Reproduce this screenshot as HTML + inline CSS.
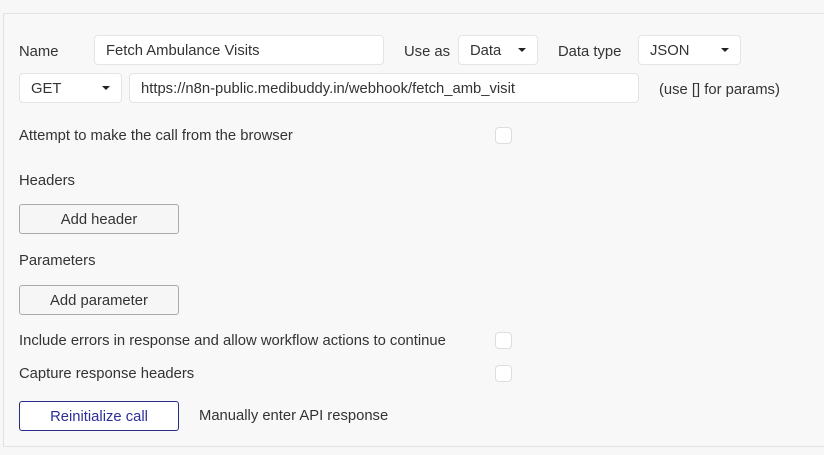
<!DOCTYPE html>
<html><head><style>
body{margin:0;width:824px;height:455px;background:#f7f7f7;font-family:"Liberation Sans",sans-serif;font-size:14.8px;color:#333;position:relative;overflow:hidden}
.p{position:absolute;left:3px;top:13px;width:840px;height:434px;border:1px solid #e2e2e2;background:#f8f8f8;box-sizing:border-box}
.a{position:absolute;white-space:nowrap}
.t{line-height:18px}
.in{position:absolute;background:#fff;border:1px solid #e4e4e4;border-radius:4px;box-sizing:border-box;padding-left:11px;white-space:nowrap}
.car{position:absolute;right:11px;top:12px;width:0;height:0;border-left:4px solid transparent;border-right:4px solid transparent;border-top:4px solid #222}
.cb{position:absolute;width:17px;height:17px;background:#fff;border:1px solid #ddd;border-radius:4px;box-sizing:border-box}
.bt{position:absolute;left:19px;width:160px;height:30px;border:1px solid #aaa;border-radius:3px;box-sizing:border-box;background:#f6f6f6;text-align:center;line-height:30px}
</style></head><body>
<div class="p"></div>
<div class="a t" style="left:19px;top:43px">Name</div>
<div class="in" style="left:94px;top:35px;width:290px;height:30px;line-height:30px">Fetch Ambulance Visits</div>
<div class="a t" style="left:404px;top:43px">Use as</div>
<div class="in" style="left:458px;top:35px;width:80px;height:30px;line-height:30px">Data<span class="car"></span></div>
<div class="a t" style="left:558px;top:43px">Data type</div>
<div class="in" style="left:638px;top:35px;width:103px;height:30px;line-height:30px">JSON<span class="car"></span></div>
<div class="in" style="left:19px;top:73px;width:103px;height:30px;line-height:30px">GET<span class="car"></span></div>
<div class="in" style="left:129px;top:73px;width:510px;height:30px;line-height:30px">https://n8n-public.medibuddy.in/webhook/fetch_amb_visit</div>
<div class="a t" style="left:659px;top:81px">(use [] for params)</div>
<div class="a t" style="left:19px;top:127px">Attempt to make the call from the browser</div>
<div class="cb" style="left:495px;top:127px"></div>
<div class="a t" style="left:19px;top:172px">Headers</div>
<div class="bt" style="top:204px">Add header</div>
<div class="a t" style="left:19px;top:252px">Parameters</div>
<div class="bt" style="top:285px">Add parameter</div>
<div class="a t" style="left:19px;top:332px">Include errors in response and allow workflow actions to continue</div>
<div class="cb" style="left:495px;top:332px"></div>
<div class="a t" style="left:19px;top:365px">Capture response headers</div>
<div class="cb" style="left:495px;top:365px"></div>
<div class="bt" style="top:401px;background:#fff;border-color:#2a2a8a;color:#2d2d9a">Reinitialize call</div>
<div class="a t" style="left:199px;top:407px">Manually enter API response</div>
</body></html>
